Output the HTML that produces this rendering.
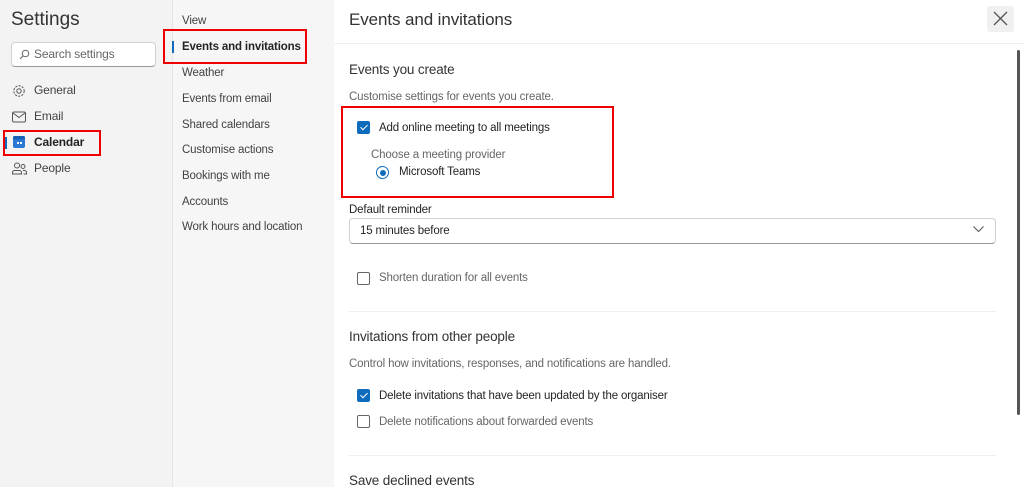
<!DOCTYPE html>
<html><head><style>
*{margin:0;padding:0;box-sizing:border-box}
body{width:1024px;height:487px;overflow:hidden;font-family:"Liberation Sans",sans-serif;color:#242424;background:#fff;position:relative;font-size:11.5px;letter-spacing:-0.15px;line-height:17px}
.a{position:absolute;white-space:nowrap}
.red{position:absolute;border:2px solid #e00;}
.cb{position:absolute;width:13px;height:13px;border:1px solid #666;border-radius:2px;background:#fff}
.cb.on{background:#0f6cbd;border-color:#0f6cbd}
.cb.on:after{content:"";position:absolute;left:3.5px;top:1px;width:3px;height:6px;border:solid #fff;border-width:0 1.5px 1.5px 0;transform:rotate(45deg)}
.mid{color:#424242}
</style></head><body>
<div class="a" style="left:0;top:0;width:172px;height:487px;background:#f3f3f3"></div>
<div class="a" style="left:172px;top:0;width:162px;height:487px;background:#f6f6f6;border-left:1px solid #e6e6e6"></div>
<div class="a" style="left:11px;top:8px;font-size:19px;line-height:24px;color:#333;letter-spacing:0">Settings</div>
<div class="a" style="left:11px;top:42px;width:145px;height:25px;background:#fff;border:1px solid #d1d1d1;border-bottom-color:#999;border-radius:4px"></div>
<svg class="a" style="left:19px;top:49px" width="11" height="11" viewBox="0 0 11 11"><circle cx="6.5" cy="4.5" r="3.3" fill="none" stroke="#666" stroke-width="1"/><path d="M4 7 L1 10" stroke="#666" stroke-width="1.1"/></svg>
<div class="a" style="left:34px;top:46px;font-size:12px;color:#666">Search settings</div>
<svg class="a" style="left:12px;top:84px" width="14" height="14" viewBox="0 0 14 14"><circle cx="7" cy="7" r="2.2" fill="none" stroke="#555"/><circle cx="7" cy="7" r="5.2" fill="none" stroke="#555" stroke-dasharray="2.2 1.2"/></svg>
<div class="a mid" style="left:34px;top:82px;font-size:12px">General</div>
<svg class="a" style="left:12px;top:111px" width="14" height="12" viewBox="0 0 14 12"><rect x="0.5" y="1" width="13" height="10" rx="1.5" fill="none" stroke="#555"/><path d="M1 2 L7 6.5 L13 2" fill="none" stroke="#555"/></svg>
<div class="a mid" style="left:34px;top:108px;font-size:12px">Email</div>
<div class="a" style="left:5px;top:137px;width:2px;height:12px;background:#0f6cbd"></div>
<svg class="a" style="left:13px;top:136px" width="12" height="12" viewBox="0 0 12 12"><rect width="12" height="12" rx="2" fill="#2b78d4"/><rect x="0" y="0" width="12" height="3.5" rx="1.5" fill="#1a5fb4"/><rect x="4" y="6" width="2" height="2" fill="#fff"/><rect x="7" y="6" width="2" height="2" fill="#fff"/></svg>
<div class="a" style="left:34px;top:134px;font-size:12px;font-weight:bold">Calendar</div>
<svg class="a" style="left:12px;top:162px" width="15" height="13" viewBox="0 0 15 13"><circle cx="5" cy="3.5" r="2.5" fill="none" stroke="#555"/><path d="M0.5 12 v-1.5 a2 2 0 0 1 2 -2 h5 a2 2 0 0 1 2 2 V12z" fill="none" stroke="#555"/><circle cx="11" cy="4.5" r="2" fill="none" stroke="#555"/><path d="M11 8.5 h1.5 a2 2 0 0 1 2 2 V12 h-3" fill="none" stroke="#555"/></svg>
<div class="a mid" style="left:34px;top:160px;font-size:12px">People</div>
<div class="red" style="left:3px;top:130px;width:98px;height:26px"></div>

<div class="a mid" style="left:182px;top:13px">View</div>
<div class="a" style="left:172px;top:41px;width:2px;height:12px;background:#0f6cbd"></div>
<div class="a" style="left:182px;top:39px;font-weight:bold">Events and invitations</div>
<div class="red" style="left:163px;top:29px;width:144px;height:35px"></div>
<div class="a mid" style="left:182px;top:65px">Weather</div>
<div class="a mid" style="left:182px;top:91px">Events from email</div>
<div class="a mid" style="left:182px;top:117px">Shared calendars</div>
<div class="a mid" style="left:182px;top:142px">Customise actions</div>
<div class="a mid" style="left:182px;top:168px">Bookings with me</div>
<div class="a mid" style="left:182px;top:194px">Accounts</div>
<div class="a mid" style="left:182px;top:219px">Work hours and location</div>

<div class="a" style="left:349px;top:9px;font-size:17px;line-height:22px;color:#333;letter-spacing:-0.1px">Events and invitations</div>
<div class="a" style="left:987px;top:6px;width:27px;height:26px;background:#f0f0f0;border-radius:3px"></div>
<svg class="a" style="left:993px;top:11px" width="15" height="15" viewBox="0 0 15 15"><path d="M1 1 L14 14 M14 1 L1 14" stroke="#555" stroke-width="1.3"/></svg>
<div class="a" style="left:334px;top:43px;width:690px;height:1px;background:#eee"></div>
<div class="a" style="left:1017px;top:50px;width:3px;height:365px;background:#555;border-radius:2px"></div>

<div class="a" style="left:349px;top:61px;font-size:13.5px;color:#333">Events you create</div>
<div class="a" style="left:349px;top:89px;color:#666">Customise settings for events you create.</div>
<div class="cb on" style="left:357px;top:121px"></div>
<div class="a" style="left:379px;top:120px">Add online meeting to all meetings</div>
<div class="a" style="left:371px;top:147px;color:#666">Choose a meeting provider</div>
<div class="a" style="left:376px;top:166px;width:13px;height:13px;border:1px solid #0f6cbd;border-radius:50%"></div>
<div class="a" style="left:379.5px;top:169.5px;width:6px;height:6px;background:#0f6cbd;border-radius:50%"></div>
<div class="a" style="left:399px;top:164px">Microsoft Teams</div>
<div class="red" style="left:341px;top:106px;width:273px;height:92px"></div>
<div class="a" style="left:349px;top:202px">Default reminder</div>
<div class="a" style="left:349px;top:218px;width:647px;height:26px;border:1px solid #d1d1d1;border-bottom-color:#999;border-radius:4px"></div>
<div class="a" style="left:360px;top:223px">15 minutes before</div>
<svg class="a" style="left:973px;top:226px" width="11" height="7" viewBox="0 0 11 7"><path d="M0.5 0.5 L5.5 5.5 L10.5 0.5" fill="none" stroke="#555"/></svg>
<div class="cb" style="left:357px;top:272px"></div>
<div class="a" style="left:379px;top:270px;color:#666">Shorten duration for all events</div>
<div class="a" style="left:349px;top:311px;width:647px;height:1px;background:#eee"></div>
<div class="a" style="left:349px;top:328px;font-size:13.5px;color:#333">Invitations from other people</div>
<div class="a" style="left:349px;top:356px;color:#666">Control how invitations, responses, and notifications are handled.</div>
<div class="cb on" style="left:357px;top:389px"></div>
<div class="a" style="left:379px;top:388px">Delete invitations that have been updated by the organiser</div>
<div class="cb" style="left:357px;top:415px"></div>
<div class="a" style="left:379px;top:414px;color:#666">Delete notifications about forwarded events</div>
<div class="a" style="left:349px;top:455px;width:647px;height:1px;background:#eee"></div>
<div class="a" style="left:349px;top:472px;font-size:13.5px;color:#333">Save declined events</div>
</body></html>
